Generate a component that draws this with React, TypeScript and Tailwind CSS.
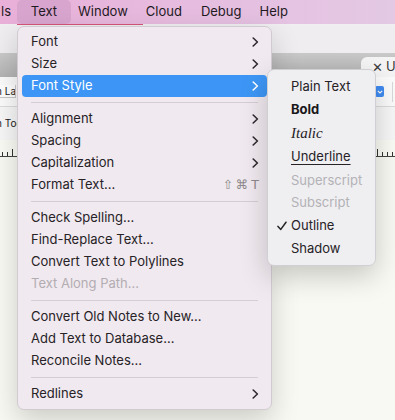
import React from 'react';

const FONT = "font-['Inter','Noto_Sans',sans-serif]";

type Item =
  | { kind: 'item'; label: string; sub?: boolean; disabled?: boolean; shortcut?: string[]; active?: boolean }
  | { kind: 'sep' };

const mainItems: Item[] = [
  { kind: 'item', label: 'Font', sub: true },
  { kind: 'item', label: 'Size', sub: true },
  { kind: 'item', label: 'Font Style', sub: true, active: true },
  { kind: 'sep' },
  { kind: 'item', label: 'Alignment', sub: true },
  { kind: 'item', label: 'Spacing', sub: true },
  { kind: 'item', label: 'Capitalization', sub: true },
  { kind: 'item', label: 'Format Text...', shortcut: ['⇧', '⌘', 'T'] },
  { kind: 'sep' },
  { kind: 'item', label: 'Check Spelling...' },
  { kind: 'item', label: 'Find-Replace Text...' },
  { kind: 'item', label: 'Convert Text to Polylines' },
  { kind: 'item', label: 'Text Along Path...', disabled: true },
  { kind: 'sep' },
  { kind: 'item', label: 'Convert Old Notes to New...' },
  { kind: 'item', label: 'Add Text to Database...' },
  { kind: 'item', label: 'Reconcile Notes...' },
  { kind: 'sep' },
  { kind: 'item', label: 'Redlines', sub: true },
];

const Chevron = ({ white }: { white?: boolean }) => (
  <svg width="7" height="10" viewBox="0 0 7 10" className="shrink-0">
    <path
      d="M1.2 1 L5.4 5 L1.2 9"
      fill="none"
      stroke={white ? '#ffffff' : '#2e2a2e'}
      strokeWidth="1.6"
      strokeLinecap="round"
      strokeLinejoin="round"
    />
  </svg>
);

const Check = () => (
  <svg width="10" height="10" viewBox="0 0 10 10" className="absolute left-[9px] top-[7px]">
    <path d="M1 5.4 L3.8 8.4 L9 1.2" fill="none" stroke="#262326" strokeWidth="1.5" strokeLinecap="round" strokeLinejoin="round" />
  </svg>
);

const MenuBar = () => (
  <div className="flex h-[24px] items-center bg-gradient-to-r from-[#e9afd8] via-[#e6bde0] to-[#e3c9e4] text-[13px] text-[#1f1a1f]">
    <span className="w-[17px] pl-[1px]">ls</span>
    <span className="flex h-full w-[54px] items-center justify-center rounded-[5px] bg-[#d8a5ce]">Text</span>
    <span className="ml-[7px]">Window</span>
    <span className="ml-[18px]">Cloud</span>
    <span className="ml-[19px]">Debug</span>
    <span className="ml-[18px]">Help</span>
  </div>
);

const Backdrop = () => (
  <div className="flex flex-col">
    <div className="relative h-[2px] bg-[#f1eef1]">
      <div className="absolute left-[17px] top-0 h-[1px] w-[126px] bg-[#d4557a]" />
    </div>
    <div className="h-[27px] bg-[#efedf0]" />
    <div className="flex h-[24px] justify-end bg-gradient-to-b from-[#c9c9c9] to-[#b3b3b3]">
      <div className="mt-[4px] flex h-[20px] w-[34px] items-center gap-[3px] rounded-tl-[6px] bg-[#f4f4f4] pl-[11px] text-[13px] text-[#3a3a3a]">
        <span className="text-[13px] leading-none">✕</span>
        <span>U</span>
      </div>
    </div>
    <div className="flex h-[30px] items-center justify-between border-b border-[#dcdcdc] bg-[#fbfbfb]">
      <div className="flex h-[13px] w-[16px] items-center overflow-hidden border-r border-b border-[#c8c8c8] bg-white text-[10px] text-[#222]">
        <span className="-ml-[4px] whitespace-nowrap">n Lay</span>
      </div>
      <div className="flex items-center gap-[8px]">
        <div className="flex h-[11px] w-[9px] items-center justify-center rounded-[2px] bg-[#3f8cf3]">
          <svg width="6" height="4" viewBox="0 0 6 4">
            <path d="M0.8 0.8 L3 3 L5.2 0.8" fill="none" stroke="#fff" strokeWidth="1.1" />
          </svg>
        </div>
        <div className="mr-[2px] h-[20px] w-[1px] bg-[#d8d8d8]" />
      </div>
    </div>
    <div className="flex h-[33px] items-center bg-[#f7f7f7] text-[10px] text-[#222]">
      <span className="-ml-[4px] whitespace-nowrap">n Too</span>
    </div>
    <div className="flex h-[17px] items-end justify-between border-b border-[#444] bg-[#fbfbf6] px-0 text-[8px] text-[#333]">
      <div className="flex items-end gap-[4px] pl-[2px]">
        <span className="h-[4px] w-[1px] bg-[#333]" />
        <span className="h-[4px] w-[1px] bg-[#333]" />
        <span className="h-[7px] w-[1px] bg-[#333]" />
      </div>
      <div className="flex items-end gap-[4px] pr-[2px]">
        <span className="leading-none">4"</span>
        <span className="h-[7px] w-[1px] bg-[#333]" />
        <span className="h-[4px] w-[1px] bg-[#333]" />
        <span className="h-[4px] w-[1px] bg-[#333]" />
        <span className="h-[4px] w-[1px] bg-[#333]" />
      </div>
    </div>
    <div className="h-[300px] bg-[#f9f9f3]" />
  </div>
);

const MainMenu = () => (
  <div className="absolute left-[17px] top-[26px] w-[255px] rounded-[7px] border border-[#d2cad1] bg-[#f0e9ef] px-[4px] py-[4px] shadow-[0_10px_28px_rgba(0,0,0,0.18)]">
    {mainItems.map((it, i) =>
      it.kind === 'sep' ? (
        <div key={i} className="flex h-[11px] items-center px-[9px]">
          <div className="h-[1px] w-full bg-[#d5cdd4]" />
        </div>
      ) : (
        <div
          key={i}
          className={
            'flex h-[22px] items-center justify-between rounded-[4px] pl-[9px] pr-[8px] text-[13px] ' +
            (it.active ? 'bg-[#3d96f5] text-white' : it.disabled ? 'text-[#b3adb2]' : 'text-[#262226]')
          }
        >
          <span>{it.label}</span>
          {it.sub && <Chevron white={it.active} />}
          {it.shortcut && (
            <span className="flex gap-[3px] text-[12.5px] text-[#8e898d] font-['DejaVu_Sans',sans-serif]">
              {it.shortcut.map((s) => (
                <span key={s}>{s}</span>
              ))}
            </span>
          )}
        </div>
      ),
    )}
  </div>
);

const SubMenu = () => (
  <div className="absolute left-[267px] top-[69px] w-[109px] rounded-[7px] border border-[#d0cfd3] bg-[#efeef1] py-[5px] text-[13px] shadow-[0_10px_28px_rgba(0,0,0,0.2)]">
    <div className="flex h-[23px] items-center pl-[23px] text-[#262226]">Plain Text</div>
    <div className="flex h-[23px] items-center pl-[23px] font-bold text-[#1a171a]">Bold</div>
    <div className="flex h-[24px] items-center pl-[23px] font-['Liberation_Serif',serif] text-[15px] italic text-[#262226]">Italic</div>
    <div className="flex h-[24px] items-center pl-[23px] text-[#262226]">
      <span className="underline decoration-1 underline-offset-[3px]">Underline</span>
    </div>
    <div className="flex h-[23px] items-center pl-[23px] text-[#b3b2b6]">Superscript</div>
    <div className="flex h-[22px] items-center pl-[23px] text-[#b3b2b6]">Subscript</div>
    <div className="relative flex h-[23px] items-center pl-[23px] text-[#262226]">
      <Check />
      Outline
    </div>
    <div className="flex h-[23px] items-center pl-[23px] text-[#262226]">Shadow</div>
  </div>
);

export default function App() {
  return (
    <div className={'relative h-[420px] w-[395px] overflow-hidden bg-[#f9f9f3] ' + FONT}>
      <MenuBar />
      <Backdrop />
      <MainMenu />
      <SubMenu />
    </div>
  );
}
